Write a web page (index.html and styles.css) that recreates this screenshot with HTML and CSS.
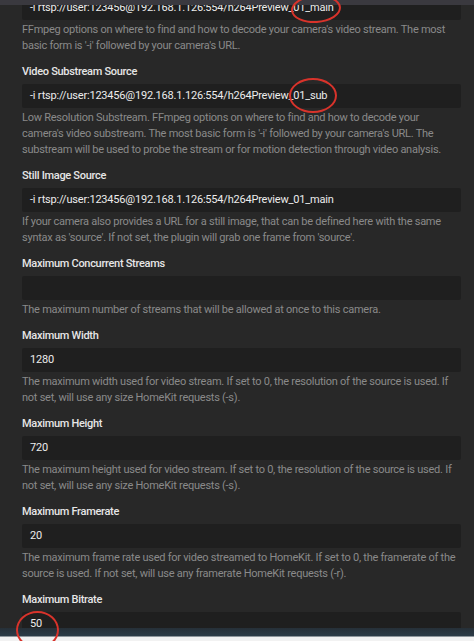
FILE: index.html
```html
<!DOCTYPE html>
<html lang="en">
<head>
<meta charset="utf-8">
<title>Camera settings</title>
<link rel="stylesheet" href="styles.css">
</head>
<body>
<div class="page">
  <div class="form">
    <div class="field">
      <div class="label">Video Source</div>
      <div class="input">-i rtsp://user:123456@192.168.1.126:554/h264Preview_01_main</div>
      <div class="desc">FFmpeg options on where to find and how to decode your camera's video stream. The most basic form is '-i' followed by your camera's URL.</div>
    </div>
    <div class="field">
      <div class="label">Video Substream Source</div>
      <div class="input">-i rtsp://user:123456@192.168.1.126:554/h264Preview_01_sub</div>
      <div class="desc">Low Resolution Substream. FFmpeg options on where to find and how to decode your camera's video substream. The most basic form is '-i' followed by your camera's URL. The substream will be used to probe the stream or for motion detection through video analysis.</div>
    </div>
    <div class="field">
      <div class="label">Still Image Source</div>
      <div class="input">-i rtsp://user:123456@192.168.1.126:554/h264Preview_01_main</div>
      <div class="desc">If your camera also provides a URL for a still image, that can be defined here with the same syntax as 'source'. If not set, the plugin will grab one frame from 'source'.</div>
    </div>
    <div class="field">
      <div class="label">Maximum Concurrent Streams</div>
      <div class="input"></div>
      <div class="desc">The maximum number of streams that will be allowed at once to this camera.</div>
    </div>
    <div class="field">
      <div class="label">Maximum Width</div>
      <div class="input">1280</div>
      <div class="desc">The maximum width used for video stream. If set to 0, the resolution of the source is used. If not set, will use any size HomeKit requests (-s).</div>
    </div>
    <div class="field">
      <div class="label">Maximum Height</div>
      <div class="input">720</div>
      <div class="desc">The maximum height used for video stream. If set to 0, the resolution of the source is used. If not set, will use any size HomeKit requests (-s).</div>
    </div>
    <div class="field">
      <div class="label">Maximum Framerate</div>
      <div class="input">20</div>
      <div class="desc">The maximum frame rate used for video streamed to HomeKit. If set to 0, the framerate of the source is used. If not set, will use any framerate HomeKit requests (-r).</div>
    </div>
    <div class="field last">
      <div class="label">Maximum Bitrate</div>
      <div class="input">50</div>
    </div>
  </div>
</div>
<div class="topbar"></div>
<div class="bottombar"></div>
<div class="mark mark-main"></div>
<div class="mark mark-sub"></div>
<div class="mark mark-bitrate"></div>
</body>
</html>
```
FILE: styles.css
```css
html, body {
  margin: 0;
  padding: 0;
  height: 100%;
  overflow: hidden;
  background: #282828;
}
body {
  font-family: Roboto, "Liberation Sans", sans-serif;
}
.page {
  display: flow-root;
  padding: 0 13px 0 22px;
}
.form {
  margin-top: -24px;
  display: flex;
  flex-direction: column;
}
.field {
  display: flex;
  flex-direction: column;
  padding-bottom: 10px;
}
.field.last {
  padding-bottom: 0;
}
.label {
  color: #e6e6e6;
  font-size: 11px;
  font-weight: 500;
  letter-spacing: -0.3px;
  line-height: 16px;
  margin-bottom: 4px;
}
.input {
  height: 24px;
  line-height: 24px;
  background: #1f1f1f;
  border-radius: 2px;
  color: #ececec;
  font-size: 11px;
  letter-spacing: -0.2px;
  padding-left: 8px;
  white-space: nowrap;
  overflow: hidden;
}
.desc {
  color: #8a8a8a;
  font-size: 11px;
  letter-spacing: -0.25px;
  line-height: 16px;
  margin-top: 2px;
}
.topbar {
  position: fixed;
  top: 0;
  left: 0;
  right: 0;
  height: 5px;
  background: #3a393f;
}
.bottombar {
  position: fixed;
  left: 0;
  right: 0;
  bottom: 0;
  height: 13px;
  background: linear-gradient(#263038 0, #2c3c47 8px, #f2f2f2 9px, #f2f2f2 13px);
}
.mark {
  position: fixed;
  border: 2px solid #d8332b;
  border-radius: 50%;
  box-sizing: border-box;
}
.mark-main {
  left: 291px;
  top: -5px;
  width: 50px;
  height: 28px;
  transform: rotate(-4deg);
}
.mark-sub {
  left: 289px;
  top: 78px;
  width: 48px;
  height: 35px;
}
.mark-bitrate {
  left: 16px;
  top: 611px;
  width: 43px;
  height: 38px;
}
```
